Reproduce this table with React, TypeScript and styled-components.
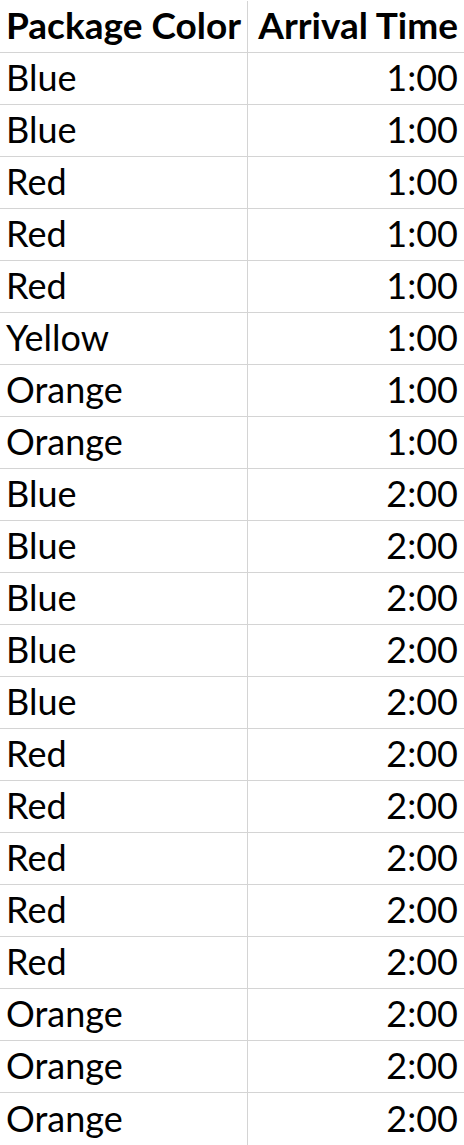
import React from "react";
import styled, { createGlobalStyle } from "styled-components";

const Global = createGlobalStyle`
  html, body { margin: 0; padding: 0; background: #ffffff; }
  body { font-family: "Lato", "Liberation Sans", sans-serif; color: #000; }
`;

const Sheet = styled.div`
  display: grid;
  grid-template-columns: 248px 1fr;
  width: 464px;
  padding-top: 1px;
`;

const Cell = styled.div<{ $right?: boolean; $bold?: boolean; $last?: boolean }>`
  box-sizing: border-box;
  height: 52px;
  display: flex;
  align-items: flex-end;
  justify-content: ${(p) => (p.$right ? "flex-end" : "flex-start")};
  padding: 0 ${(p) => (p.$right ? "6px" : "0")} 9px ${(p) => (p.$right ? "0" : "6px")};
  border-bottom: ${(p) => (p.$last ? "none" : "1px solid #d4d4d4")};
  border-right: ${(p) => (p.$right ? "none" : "1px solid #d4d4d4")};
  font-size: ${(p) => (p.$bold ? "37px" : "36px")};
  font-weight: ${(p) => (p.$bold ? 700 : 400)};
  line-height: 1;
  white-space: nowrap;
  overflow: hidden;
`;

const rows: [string, string][] = [
  ["Blue", "1:00"],
  ["Blue", "1:00"],
  ["Red", "1:00"],
  ["Red", "1:00"],
  ["Red", "1:00"],
  ["Yellow", "1:00"],
  ["Orange", "1:00"],
  ["Orange", "1:00"],
  ["Blue", "2:00"],
  ["Blue", "2:00"],
  ["Blue", "2:00"],
  ["Blue", "2:00"],
  ["Blue", "2:00"],
  ["Red", "2:00"],
  ["Red", "2:00"],
  ["Red", "2:00"],
  ["Red", "2:00"],
  ["Red", "2:00"],
  ["Orange", "2:00"],
  ["Orange", "2:00"],
  ["Orange", "2:00"],
];

export default function App() {
  return (
    <>
      <Global />
      <Sheet>
        <Cell $bold>Package Color</Cell>
        <Cell $bold $right>Arrival Time</Cell>
        {rows.map(([c, t], i) => (
          <React.Fragment key={i}>
            <Cell $last={i === rows.length - 1}>{c}</Cell>
            <Cell $right $last={i === rows.length - 1}>{t}</Cell>
          </React.Fragment>
        ))}
      </Sheet>
    </>
  );
}
